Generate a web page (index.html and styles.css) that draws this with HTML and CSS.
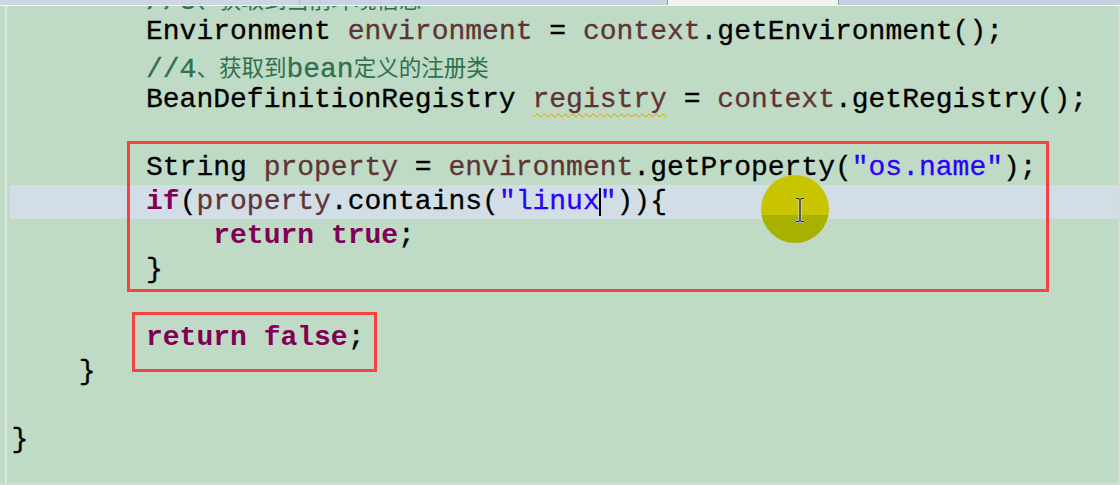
FILE: index.html
```html
<!DOCTYPE html>
<html lang="zh">
<head>
<meta charset="utf-8">
<title>Editor</title>
<link rel="stylesheet" href="styles.css">
</head>
<body>
<div class="screen">
  <div class="tabs">
    <span class="tab tab-a"></span>
    <span class="tab tab-b"></span>
    <span class="tab tab-active"></span>
    <span class="tab tab-c"></span>
  </div>
  <div class="editor">
    <div class="gutter"></div>
    <div class="code">
      <div class="line partial">        <span class="cm">//3<span class="cjk">、获取到当前环境信息</span></span></div>
      <div class="line">        Environment <span class="var">environment</span> = <span class="var">context</span>.getEnvironment();</div>
      <div class="line">        <span class="cm">//4<span class="cjk">、获取到</span>bean<span class="cjk">定义的注册类</span></span></div>
      <div class="line">        BeanDefinitionRegistry <span class="var warn">registry</span> = <span class="var">context</span>.getRegistry();</div>
      <div class="line"> </div>
      <div class="line">        String <span class="var">property</span> = <span class="var">environment</span>.getProperty(<span class="str">"os.name"</span>);</div>
      <div class="line current">        <span class="kw">if</span>(<span class="var">property</span>.contains(<span class="str">"linux<span class="caret"></span>"</span>)){</div>
      <div class="line">            <span class="kw">return</span> <span class="kw">true</span>;</div>
      <div class="line">        }</div>
      <div class="line"> </div>
      <div class="line">        <span class="kw">return</span> <span class="kw">false</span>;</div>
      <div class="line">    }</div>
      <div class="line"> </div>
      <div class="line">}</div>
    </div>
  </div>
  <div class="mark mark-if"></div>
  <div class="mark mark-ret"></div>
  <div class="click"></div>
  <svg class="ibeam" width="12" height="28" viewBox="0 0 12 28">
    <path d="M2 2.5h3.5M6.5 2.5h3.5M6 3v22M2 25.5h3.5M6.5 25.5h3.5" stroke="#e8e8e8" stroke-width="3" fill="none"/>
    <path d="M2 2.5h3.5M6.5 2.5h3.5M6 3v22M2 25.5h3.5M6.5 25.5h3.5" stroke="#2a2a2a" stroke-width="1.5" fill="none"/>
  </svg>
</div>
</body>
</html>
```
FILE: styles.css
```css
html, body {
  margin: 0;
  padding: 0;
}
body {
  width: 1120px;
  height: 485px;
  overflow: hidden;
  background: #bfdac5;
}
.screen {
  position: relative;
  width: 1120px;
  height: 485px;
  display: flex;
  flex-direction: column;
}
.tabs {
  height: 5px;
  flex: none;
  display: flex;
  background: #d9dfe8;
  border-bottom: 1px solid #f4f6f4;
  position: relative;
  z-index: 2;
}
.tab {
  height: 5px;
  box-sizing: border-box;
}
.tab-a {
  width: 300px;
  background: #cdd6e2;
  border-right: 1px solid #a9b4c4;
}
.tab-b {
  width: 368px;
  background: #c9d3e1;
  border-right: 1px solid #8e9bb0;
}
.tab-active {
  width: 170px;
  background: #f2f2f0;
}
.tab-c {
  flex: 1;
  background: #c6d1e0;
  border-left: 1px solid #8e9bb0;
}
.editor {
  flex: 1;
  display: flex;
  overflow: hidden;
  border-bottom: 2px solid #d5dcd7;
  border-right: 2px solid #d8dcd9;
}
.gutter {
  width: 5px;
  flex: none;
  border-right: 2px solid #dde6df;
}
.code {
  flex: 1;
  margin-top: -25px;
  padding-left: 3px;
  font-family: "Liberation Mono", "DejaVu Sans Mono", monospace;
  font-size: 28px;
  color: #000;
  -webkit-text-stroke: 0.3px currentColor;
}
.line {
  height: 34px;
  line-height: 34px;
  white-space: pre;
  padding-left: 1.6px;
}
.line.partial .cm {
  vertical-align: 8px;
}
.line.current {
  background: #d2dee6;
}
.cm {
  color: #2f7050;
}
.cjk {
  font-family: "Noto Sans CJK SC", sans-serif;
  font-size: 22.5px;
  vertical-align: 1px;
  -webkit-text-stroke: 0;
}
.var {
  color: #5e3434;
}
.kw {
  color: #7f0055;
  font-weight: bold;
  -webkit-text-stroke: 0;
}
.str {
  color: #2a00ff;
}
.warn {
  text-decoration: underline wavy #d9a400;
  text-decoration-thickness: 1px;
  text-underline-offset: 6px;
}
.caret {
  display: inline-block;
  width: 0;
  height: 28px;
  border-left: 2px solid #000;
  margin-left: -1px;
  margin-right: -1px;
  vertical-align: middle;
}
.mark {
  position: absolute;
  border: 3px solid #f44242;
  box-sizing: border-box;
}
.mark-if {
  left: 127px;
  top: 141px;
  width: 922px;
  height: 151px;
}
.mark-ret {
  left: 132px;
  top: 312px;
  width: 245px;
  height: 60px;
}
.click {
  position: absolute;
  left: 761px;
  top: 175px;
  width: 68px;
  height: 68px;
  border-radius: 50%;
  background: linear-gradient(to bottom, #c9c400 0, #c9c400 40px, #a8b100 40px, #a8b100 100%);
}
.ibeam {
  position: absolute;
  left: 794px;
  top: 196px;
}
```
